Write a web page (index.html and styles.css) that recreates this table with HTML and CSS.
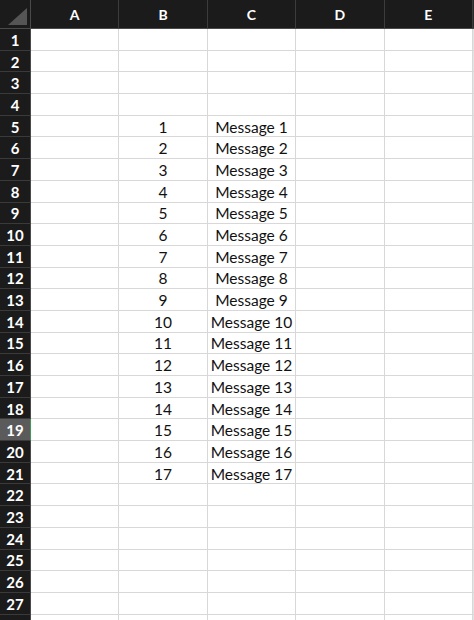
FILE: index.html
```html
<!DOCTYPE html>
<html>
<head>
<meta charset="utf-8">
<link rel="stylesheet" href="styles.css">
</head>
<body>
<div class="sheet">
  <div class="corner"><span class="tri"></span></div>
  <div class="colh">A</div><div class="colh">B</div><div class="colh">C</div><div class="colh">D</div><div class="colh">E</div><div class="colh edge"></div>

  <div class="rowh">1</div><div class="c"></div><div class="c"></div><div class="c"></div><div class="c"></div><div class="c"></div><div class="c edge"></div>
  <div class="rowh">2</div><div class="c"></div><div class="c"></div><div class="c"></div><div class="c"></div><div class="c"></div><div class="c edge"></div>
  <div class="rowh">3</div><div class="c"></div><div class="c"></div><div class="c"></div><div class="c"></div><div class="c"></div><div class="c edge"></div>
  <div class="rowh">4</div><div class="c"></div><div class="c"></div><div class="c"></div><div class="c"></div><div class="c"></div><div class="c edge"></div>
  <div class="rowh">5</div><div class="c"></div><div class="c">1</div><div class="c">Message 1</div><div class="c"></div><div class="c"></div><div class="c edge"></div>
  <div class="rowh">6</div><div class="c"></div><div class="c">2</div><div class="c">Message 2</div><div class="c"></div><div class="c"></div><div class="c edge"></div>
  <div class="rowh">7</div><div class="c"></div><div class="c">3</div><div class="c">Message 3</div><div class="c"></div><div class="c"></div><div class="c edge"></div>
  <div class="rowh">8</div><div class="c"></div><div class="c">4</div><div class="c">Message 4</div><div class="c"></div><div class="c"></div><div class="c edge"></div>
  <div class="rowh">9</div><div class="c"></div><div class="c">5</div><div class="c">Message 5</div><div class="c"></div><div class="c"></div><div class="c edge"></div>
  <div class="rowh">10</div><div class="c"></div><div class="c">6</div><div class="c">Message 6</div><div class="c"></div><div class="c"></div><div class="c edge"></div>
  <div class="rowh">11</div><div class="c"></div><div class="c">7</div><div class="c">Message 7</div><div class="c"></div><div class="c"></div><div class="c edge"></div>
  <div class="rowh">12</div><div class="c"></div><div class="c">8</div><div class="c">Message 8</div><div class="c"></div><div class="c"></div><div class="c edge"></div>
  <div class="rowh">13</div><div class="c"></div><div class="c">9</div><div class="c">Message 9</div><div class="c"></div><div class="c"></div><div class="c edge"></div>
  <div class="rowh">14</div><div class="c"></div><div class="c">10</div><div class="c">Message 10</div><div class="c"></div><div class="c"></div><div class="c edge"></div>
  <div class="rowh">15</div><div class="c"></div><div class="c">11</div><div class="c">Message 11</div><div class="c"></div><div class="c"></div><div class="c edge"></div>
  <div class="rowh">16</div><div class="c"></div><div class="c">12</div><div class="c">Message 12</div><div class="c"></div><div class="c"></div><div class="c edge"></div>
  <div class="rowh">17</div><div class="c"></div><div class="c">13</div><div class="c">Message 13</div><div class="c"></div><div class="c"></div><div class="c edge"></div>
  <div class="rowh">18</div><div class="c"></div><div class="c">14</div><div class="c">Message 14</div><div class="c"></div><div class="c"></div><div class="c edge"></div>
  <div class="rowh sel">19</div><div class="c"></div><div class="c">15</div><div class="c">Message 15</div><div class="c"></div><div class="c"></div><div class="c edge"></div>
  <div class="rowh">20</div><div class="c"></div><div class="c">16</div><div class="c">Message 16</div><div class="c"></div><div class="c"></div><div class="c edge"></div>
  <div class="rowh">21</div><div class="c"></div><div class="c">17</div><div class="c">Message 17</div><div class="c"></div><div class="c"></div><div class="c edge"></div>
  <div class="rowh">22</div><div class="c"></div><div class="c"></div><div class="c"></div><div class="c"></div><div class="c"></div><div class="c edge"></div>
  <div class="rowh">23</div><div class="c"></div><div class="c"></div><div class="c"></div><div class="c"></div><div class="c"></div><div class="c edge"></div>
  <div class="rowh">24</div><div class="c"></div><div class="c"></div><div class="c"></div><div class="c"></div><div class="c"></div><div class="c edge"></div>
  <div class="rowh">25</div><div class="c"></div><div class="c"></div><div class="c"></div><div class="c"></div><div class="c"></div><div class="c edge"></div>
  <div class="rowh">26</div><div class="c"></div><div class="c"></div><div class="c"></div><div class="c"></div><div class="c"></div><div class="c edge"></div>
  <div class="rowh">27</div><div class="c"></div><div class="c"></div><div class="c"></div><div class="c"></div><div class="c"></div><div class="c edge"></div>
  <div class="rowh"></div><div class="c"></div><div class="c"></div><div class="c"></div><div class="c"></div><div class="c"></div><div class="c edge"></div>
</div>
</body>
</html>
```
FILE: styles.css
```css
html, body {
  margin: 0;
  padding: 0;
  background: #ffffff;
  overflow: hidden;
}
.sheet {
  display: grid;
  grid-template-columns: 31px repeat(5, 88.4px) 1fr;
  grid-template-rows: 29px;
  grid-auto-rows: 21.7px;
  font-family: Lato, "Open Sans", sans-serif;
  width: 474px;
}
.corner {
  background: #1b1b1b;
  border-right: 1px solid #4a4a4a;
  border-bottom: 1px solid #4a4a4a;
  position: relative;
}
.tri {
  position: absolute;
  right: 3px;
  bottom: 3px;
  width: 0;
  height: 0;
  border-left: 19px solid transparent;
  border-bottom: 17px solid #555555;
}
.colh {
  background: #1b1b1b;
  color: #ffffff;
  font-weight: 700;
  font-size: 14px;
  display: flex;
  align-items: center;
  justify-content: center;
  border-right: 1px solid #3c3c3c;
  border-bottom: 1px solid #4a4a4a;
}
.colh.edge {
  border-right: none;
  background: #2a2a2a;
}
.rowh {
  background: #1b1b1b;
  color: #ffffff;
  font-weight: 700;
  font-size: 15px;
  display: flex;
  align-items: center;
  justify-content: center;
  padding-top: 1px;
  border-right: 1px solid #4a4a4a;
  border-bottom: 1px solid #3a3a3a;
}
.rowh.sel {
  background: #5b5b5b;
  border-right: 1px solid #3f9a58;
}
.c {
  border-right: 1px solid #d8d8d8;
  border-bottom: 1px solid #d8d8d8;
  color: #111111;
  font-size: 15.5px;
  display: flex;
  align-items: center;
  justify-content: center;
  padding-top: 1px;
  white-space: nowrap;
}
.c.edge {
  border-right: none;
  background: #e4e4e4;
}
```
